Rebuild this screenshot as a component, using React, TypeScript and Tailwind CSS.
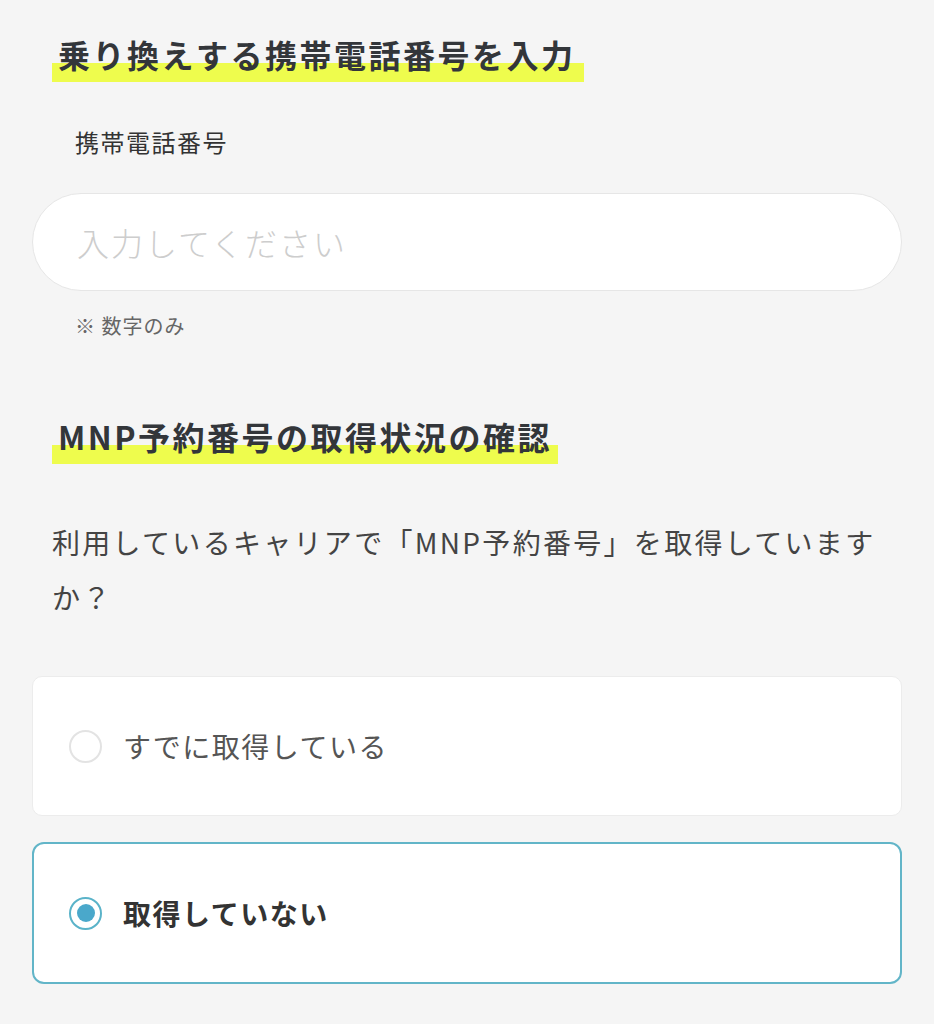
import React from "react";

export default function App() {
  return (
    <div className="min-h-screen w-full bg-[#f5f5f5] font-['Noto_Sans_CJK_JP','Noto_Sans',sans-serif] text-[#333]">
      <div className="px-[32px] pt-[34px] pb-[40px]">
        <h2 className="ml-[20px] w-fit pl-[6px] pr-[8px] pb-[8px] text-[32px] leading-[40px] font-bold tracking-[2.5px] text-[#33363a] bg-[linear-gradient(transparent_61%,#eefc4d_61%)]">
          乗り換えする携帯電話番号を入力
        </h2>

        <div className="mt-[42px] ml-[43px] text-[24px] leading-[36px] tracking-[1.5px] text-[#333]">
          携帯電話番号
        </div>

        <input
          type="text"
          placeholder="入力してください"
          className="mt-[33px] block h-[98px] w-full rounded-full border border-[#e6e6e6] bg-white pl-[44px] pr-[24px] text-[32px] font-light tracking-[2px] text-[#333] outline-none placeholder:text-[#cdcdcd]"
        />

        <div className="mt-[20px] ml-[43px] text-[20px] leading-[30px] tracking-[1px] text-[#666]">
          ※ 数字のみ
        </div>

        <h2 className="mt-[75px] ml-[20px] w-fit pl-[6px] pr-[6px] pb-[8px] text-[32px] leading-[40px] font-bold tracking-[2.5px] text-[#33363a] bg-[linear-gradient(transparent_61%,#eefc4d_61%)]">
          MNP予約番号の取得状況の確認
        </h2>

        <p className="mt-[51px] ml-[20px] text-[28px] leading-[55px] tracking-[2.3px] text-[#444]">
          利用しているキャリアで「MNP予約番号」を取得していますか？
        </p>

        <div className="mt-[51px] flex flex-col gap-[26px]">
          <label className="flex h-[140px] items-center rounded-[10px] border border-[#ececec] bg-white pl-[36px]">
            <span className="h-[33px] w-[33px] shrink-0 rounded-full border-2 border-[#e3e3e3] bg-white" />
            <span className="ml-[21px] text-[28px] leading-[40px] tracking-[1.5px] text-[#555]">
              すでに取得している
            </span>
          </label>

          <label className="flex h-[142px] items-center rounded-[12px] border-2 border-[#62b5c8] bg-white pl-[35px]">
            <span className="flex h-[33px] w-[33px] shrink-0 items-center justify-center rounded-full border-[2.5px] border-[#5ab3c9] bg-white">
              <span className="h-[18px] w-[18px] rounded-full bg-[#4aa8cb]" />
            </span>
            <span className="ml-[21px] text-[28px] leading-[40px] font-bold tracking-[1.5px] text-[#333]">
              取得していない
            </span>
          </label>
        </div>
      </div>
    </div>
  );
}
